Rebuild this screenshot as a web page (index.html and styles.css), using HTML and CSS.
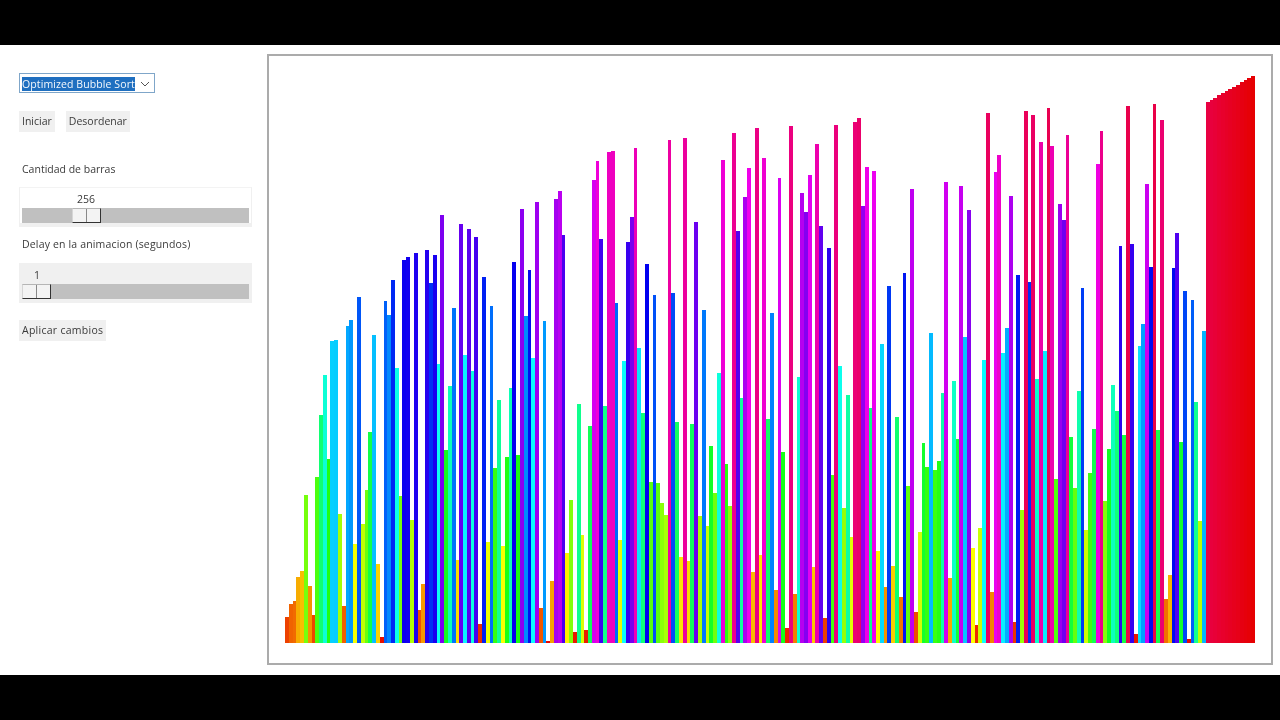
FILE: index.html
```html
<!DOCTYPE html>
<html lang="es">
<head>
<meta charset="utf-8">
<title>Sorting visualizer</title>
<link rel="stylesheet" href="styles.css">
</head>
<body>
<div class="letterbox"></div>
<main class="app">
  <aside class="panel">
    <div class="select">
      <span class="select-value">Optimized Bubble Sort</span>
      <svg class="chevron" viewBox="0 0 10 6" width="10" height="6"><path d="M1 1l4 4 4-4" fill="none" stroke="#555" stroke-width="1"/></svg>
    </div>
    <div class="actions">
      <button class="btn">Iniciar</button>
      <button class="btn">Desordenar</button>
    </div>
    <p class="label label-first">Cantidad de barras</p>
    <div class="slider slider-light">
      <div class="slider-value value-bars">256</div>
      <div class="track track-bars"><div class="thumb"><span class="grip"></span><span class="grip"></span></div></div>
    </div>
    <p class="label label-second">Delay en la animacion (segundos)</p>
    <div class="slider slider-grey">
      <div class="slider-value value-delay">1</div>
      <div class="track"><div class="thumb"><span class="grip"></span><span class="grip"></span></div></div>
    </div>
    <button class="btn btn-apply">Aplicar cambios</button>
  </aside>
  <section class="stage">
    <svg class="chart" id="chart" viewBox="0 0 970 570" width="970" height="570"></svg>
  </section>
</main>
<div class="letterbox"></div>
<script src="app.js"></script>
</body>
</html>
```
FILE: styles.css
```css
* { box-sizing: border-box; }
html, body { margin: 0; padding: 0; }
body {
  width: 1280px;
  height: 720px;
  overflow: hidden;
  background: #fff;
  display: flex;
  flex-direction: column;
  font-family: "Open Sans", "Noto Sans", "Liberation Sans", sans-serif;
  font-size: 10.5px;
  color: #3a3a3a;
}
.letterbox { height: 45px; flex: none; background: #000; }
.app { flex: 1; display: flex; min-height: 0; filter: blur(0.4px); }
.panel {
  width: 267px;
  flex: none;
  padding: 28px 15px 0 19px;
  display: flex;
  flex-direction: column;
  align-items: flex-start;
}
.select {
  width: 136px;
  height: 20px;
  border: 1px solid #7fa6c9;
  display: flex;
  align-items: center;
  padding: 1px 3px 0 2px;
  justify-content: space-between;
}
.select-value {
  background: #1f6fc0;
  color: #f4f8fc;
  line-height: 14px;
  white-space: nowrap;
  letter-spacing: 0.1px;
}
.chevron { flex: none; margin-right: 1px; }
.actions { display: flex; gap: 11px; margin-top: 18px; }
.btn {
  height: 21px;
  padding: 0 3px 2px;
  border: 0;
  background: #f0f0f0;
  color: #3a3a3a;
  font: inherit;
  white-space: nowrap;
}
.label { margin: 0; padding-left: 3px; line-height: 14px; }
.label-first { margin-top: 30px; }
.label-second { margin-top: 10px; letter-spacing: 0.16px; }
.slider {
  width: 233px;
  height: 40px;
  margin-top: 11px;
  padding: 3px 2px;
  display: flex;
  flex-direction: column;
  border: 1px solid #f0f0f0;
  border-width: 0 1px 4px;
}
.slider-light { background: #fff; border-top: 1px solid #f3f3f3; }
.slider-light .slider-value { height: 17px; line-height: 17px; }
.slider-grey { background: #f0f0f0; margin-top: 12px; }
.slider-value { height: 18px; line-height: 18px; }
.value-bars { padding-left: 55px; }
.value-delay { padding-left: 12px; }
.track { height: 15px; background: #c0c0c0; display: flex; }
.track-bars { padding-left: 50px; }
.thumb {
  width: 29px;
  height: 15px;
  display: flex;
  border-top: 1px solid #b5b5b5;
  border-left: 1px solid #d5d5d5;
  border-right: 1px solid #333;
  border-bottom: 1px solid #333;
}
.grip { flex: 1; background: #f3f3f3; }
.grip + .grip { border-left: 1px solid #888; }
.btn-apply { margin-top: 17px; letter-spacing: 0.27px; }
.stage {
  flex: 1;
  margin: 9px 7px 10px 0;
  border: 2px solid #ababab;
  padding: 0 16px 20px 16px;
  display: flex;
  align-items: flex-end;
}
.chart { display: block; flex: none; shape-rendering: crispEdges; }
```
FILE: app.js
```js
var heights = [
26,39,42,66,72,148,57,28,166,228,268,184,302,303,129,37,317,323,99,346,
119,153,211,308,79,6,342,328,363,275,147,383,386,123,390,33,59,393,360,388,
279,428,193,257,335,83,419,288,414,272,406,19,366,101,337,175,243,97,186,255,
381,188,434,327,373,285,441,35,322,2,62,444,452,408,90,143,11,239,108,13,
217,463,482,404,237,491,492,340,103,282,401,426,495,295,230,379,161,348,160,140,
128,503,350,221,86,505,82,219,421,127,333,117,197,150,270,483,179,137,510,412,
245,446,475,71,515,88,485,224,330,53,465,191,15,517,49,266,450,431,468,76,
499,417,25,395,168,518,277,135,248,106,521,525,437,476,235,472,92,299,56,357,
77,226,46,370,157,454,31,111,200,176,310,173,182,250,461,65,262,204,457,306,
433,95,18,115,283,530,51,471,488,290,315,447,21,368,133,532,361,528,264,501,
292,535,497,164,439,423,508,206,155,252,355,113,170,214,479,512,142,194,258,232,
397,208,537,399,9,297,319,459,376,539,213,523,44,68,375,410,201,352,4,343,
241,122,312,541,543,545,548,550,552,554,556,558,561,563,565,567
];
/* lightness per 60 degrees of hue, matching how the reference renders each colour */
var lightness = [45, 50, 54, 52, 47, 47, 45];
function lightnessFor(hue) {
  var pos = hue / 60;
  var low = Math.min(Math.floor(pos), 5);
  return lightness[low] + (lightness[low + 1] - lightness[low]) * (pos - low);
}
var chart = document.getElementById("chart");
var pitch = 970 / heights.length;
heights.forEach(function (h, i) {
  var hue = h / 568 * 360;
  var bar = document.createElementNS("http://www.w3.org/2000/svg", "rect");
  bar.setAttribute("x", (i * pitch).toFixed(3));
  bar.setAttribute("y", 570 - h);
  bar.setAttribute("width", pitch.toFixed(3));
  bar.setAttribute("height", h);
  bar.setAttribute("fill", "hsl(" + hue.toFixed(1) + ",100%," + lightnessFor(hue).toFixed(1) + "%)");
  chart.appendChild(bar);
});
```
